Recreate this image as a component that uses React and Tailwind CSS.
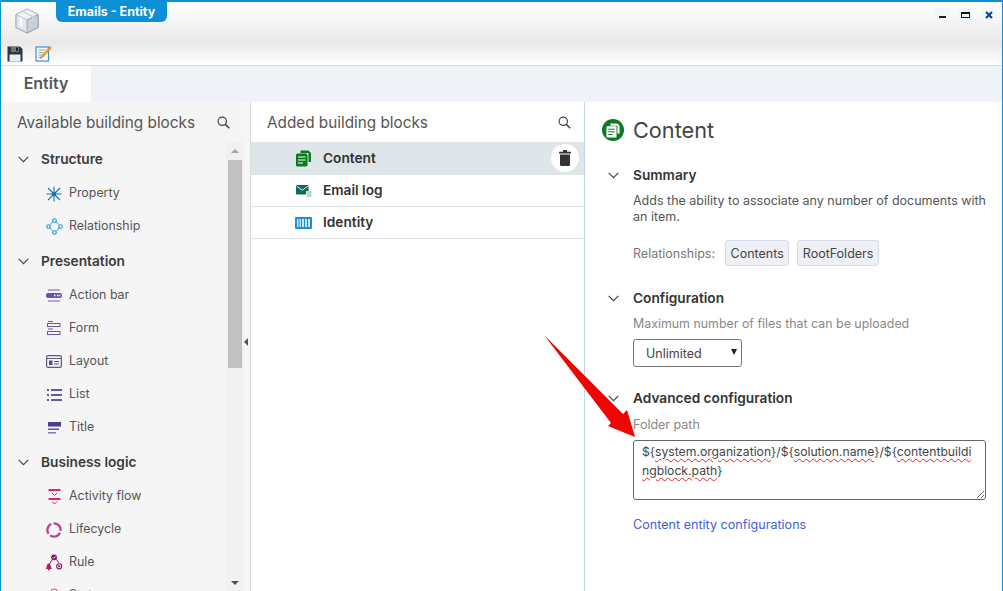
import React from "react";

const Chevron = ({ className = "" }) => (
  <svg width="11" height="7" viewBox="0 0 11 7" className={className}>
    <path d="M0.7 0.8 L5.5 5.6 L10.3 0.8" fill="none" stroke="#444" strokeWidth="1.2" />
  </svg>
);

const Search = () => (
  <svg width="13" height="13" viewBox="0 0 14 14">
    <circle cx="5.7" cy="5.7" r="4.5" fill="none" stroke="#444" strokeWidth="1.3" />
    <path d="M9 9 L13.2 13.2" stroke="#444" strokeWidth="1.6" />
  </svg>
);

const Cube = () => (
  <svg width="24" height="26" viewBox="0 0 26 28">
    <path d="M13 1 L25 7 L25 21 L13 27 L1 21 L1 7Z" fill="#e4e8ee" stroke="#8d97a6" strokeWidth="1" />
    <path d="M1 7 L13 13 L25 7 L13 1Z" fill="#f0f2f6" stroke="#aab3bf" strokeWidth="0.8" />
    <path d="M13 13 L13 27 L25 21 L25 7Z" fill="#c9d0da" stroke="#8d97a6" strokeWidth="0.8" />
    <path d="M7 4 L19 10 L19 14 L21 13 L21 9 L9 3Z" fill="#d0d5de" />
    <path d="M5 9.5 L5 19 L8 20.5 L8 11Z" fill="#fff" />
  </svg>
);

const Save = () => (
  <svg width="16" height="16" viewBox="0 0 16 16">
    <path d="M0.5 0.5 H13 L15.5 3 V15.5 H0.5Z" fill="#2e343c" />
    <rect x="4" y="1" width="8" height="5" fill="#6f7780" />
    <rect x="9" y="1.5" width="2" height="3.5" fill="#1d2126" />
    <rect x="2.5" y="8.5" width="11" height="7" fill="#e9edf5" />
  </svg>
);

const EditDoc = () => (
  <svg width="17" height="17" viewBox="0 0 17 17">
    <rect x="1" y="2" width="12.5" height="14" fill="#f7fbff" stroke="#3f8fd0" strokeWidth="1.2" />
    <path d="M3.5 5 H10 M3.5 7.5 H8 M3.5 10 H6.5 M3.5 12.5 H6" stroke="#8aa0b5" strokeWidth="1" />
    <path d="M15 1.5 L16.5 3 L8 12 L5.5 13.5 L6.5 10.5Z" fill="#f0a92e" stroke="#b86f10" strokeWidth="0.6" />
  </svg>
);

const IProperty = () => (
  <svg width="16" height="16" viewBox="0 0 16 16">
    <path d="M8 0.5 V15.5 M2 2 L14 14 M14 2 L2 14 M0.5 8 H15.5" stroke="#1478ae" strokeWidth="1.1" fill="none" />
    <circle cx="8" cy="8" r="2.2" fill="#1478ae" />
  </svg>
);

const IRel = () => (
  <svg width="17" height="17" viewBox="0 0 17 17" fill="none" stroke="#2d93d6" strokeWidth="1.1">
    <circle cx="8.5" cy="2.5" r="1.8" />
    <circle cx="2.5" cy="8.5" r="1.8" />
    <circle cx="14.5" cy="8.5" r="1.8" />
    <circle cx="8.5" cy="14.5" r="1.8" />
    <path d="M7 3.8 L3.8 7 M10 3.8 L13.2 7 M3.8 10 L7 13.2 M13.2 10 L10 13.2" strokeDasharray="1.4 0.8" />
  </svg>
);

const IAction = () => (
  <svg width="16" height="13" viewBox="0 0 16 13">
    <rect x="2" y="0" width="12" height="2" fill="#b3a6d2" />
    <rect x="0" y="4" width="16" height="5" rx="2" fill="#6b55a3" />
    <path d="M8 6.5 H9.5 M11 6.5 H12.5 M13.2 6.5 H14.4" stroke="#fff" strokeWidth="1.3" />
    <rect x="2" y="11" width="12" height="2" fill="#b3a6d2" />
  </svg>
);

const IForm = () => (
  <svg width="14" height="15" viewBox="0 0 14 15" fill="none" stroke="#6b55a3" strokeWidth="1">
    <path d="M1 0.5 H6" />
    <rect x="0.5" y="2.5" width="12.5" height="3" />
    <path d="M1 8 H6" />
    <rect x="0.5" y="10.5" width="12.5" height="3" />
  </svg>
);

const ILayout = () => (
  <svg width="16" height="13" viewBox="0 0 16 13">
    <rect x="0.6" y="0.6" width="14.8" height="11.8" rx="1.5" fill="none" stroke="#5f5a85" strokeWidth="1.2" />
    <path d="M1 3.5 H15" stroke="#5f5a85" strokeWidth="1" />
    <rect x="3" y="5.5" width="3.5" height="4.5" fill="#5f4a9c" />
    <path d="M8 6.5 H13 M8 9 H13" stroke="#5f4a9c" strokeWidth="1.2" />
  </svg>
);

const IList = () => (
  <svg width="15" height="12" viewBox="0 0 15 12" fill="#6b55a3">
    <rect x="0" y="0" width="2" height="2" />
    <rect x="4" y="0" width="11" height="2" />
    <rect x="0" y="5" width="2" height="2" />
    <rect x="4" y="5" width="11" height="2" />
    <rect x="0" y="10" width="2" height="2" />
    <rect x="4" y="10" width="11" height="2" />
  </svg>
);

const ITitle = () => (
  <svg width="13" height="12" viewBox="0 0 13 12" fill="#4f3a91">
    <rect x="0" y="0" width="13" height="4.5" />
    <rect x="0" y="6.5" width="11" height="1.5" fill="#6b55a3" />
    <rect x="0" y="10" width="8" height="1.5" fill="#8a78b8" />
  </svg>
);

const IFlow = () => (
  <svg width="13" height="16" viewBox="0 0 13 16">
    <rect x="0.5" y="0" width="12" height="2" fill="#e8245f" />
    <path d="M4 4 L6.5 6.5 L9 4" fill="none" stroke="#e8245f" strokeWidth="1" />
    <rect x="0.5" y="9" width="12" height="2" fill="#e8245f" />
    <path d="M4 12.5 L6.5 15 L9 12.5" fill="none" stroke="#e8245f" strokeWidth="1" />
  </svg>
);

const ILife = () => (
  <svg width="16" height="16" viewBox="0 0 16 16" fill="none" stroke="#b93a93" strokeWidth="2.2">
    <circle cx="8" cy="8" r="6.6" strokeDasharray="11.5 2.3" transform="rotate(25 8 8)" />
  </svg>
);

const IRule = () => (
  <svg width="19" height="18" viewBox="0 0 19 18">
    <path d="M9 4 L4 11 M11 4 L14.5 9" stroke="#7a1a5c" strokeWidth="1" />
    <circle cx="9.5" cy="3" r="3" fill="#7a1a5c" />
    <path d="M8 3 L9.2 4.2 L11.2 2" stroke="#fff" strokeWidth="0.9" fill="none" />
    <path d="M1 14.5 H7 M2.5 14.5 C2.5 9 5.5 9 5.5 14.5 M4 15 V17" stroke="#a3216f" strokeWidth="1.5" fill="#a3216f" />
    <circle cx="15" cy="12.5" r="2.7" fill="none" stroke="#7a1a5c" strokeWidth="1.1" />
    <circle cx="15" cy="12.5" r="1.2" fill="#7a1a5c" />
  </svg>
);

const IState = () => (
  <svg width="16" height="16" viewBox="0 0 16 16" fill="none" stroke="#d94f9a" strokeWidth="1.2">
    <circle cx="8" cy="4" r="3" />
  </svg>
);

const IContent = () => (
  <svg width="17" height="17" viewBox="0 0 16 17">
    <path d="M5 0.5 H13 L15.5 3 V12 H13 V3 H5Z" fill="#0b7a20" />
    <rect x="0.5" y="3.5" width="11.5" height="13" rx="1.5" fill="#0b7a20" />
    <path d="M2.5 7 H10 M2.5 10 H10 M2.5 13 H7.5" stroke="#fff" strokeWidth="1.1" />
  </svg>
);

const IMail = () => (
  <svg width="16" height="12" viewBox="0 0 16 12">
    <rect x="0" y="0" width="12.5" height="9.5" rx="1" fill="#0e6b5b" />
    <path d="M0.5 1 L6.2 5.2 L12 1" fill="none" stroke="#fff" strokeWidth="0.9" />
    <rect x="10" y="6" width="6" height="6" fill="#fff" />
    <path d="M10.5 7 H15.5 M10.5 9 H15.5 M10.5 11 H15.5" stroke="#73ad9f" strokeWidth="1" />
  </svg>
);

const IIdentity = () => (
  <svg width="17" height="12" viewBox="0 0 17 12">
    <rect x="0" y="0" width="17" height="12" rx="1" fill="#1c8fdc" />
    <rect x="2" y="2" width="13" height="8" fill="#cfe8f9" />
    <path d="M4 2 V10 M6.5 2 V10 M9.5 2 V10 M12.5 2 V10" stroke="#1c8fdc" strokeWidth="1.1" />
  </svg>
);

const Trash = () => (
  <svg width="12" height="16" viewBox="0 0 12 16" fill="#333">
    <rect x="0" y="1.8" width="12" height="1.8" rx="0.4" />
    <rect x="4" y="0" width="4" height="2" />
    <path d="M1 4.6 H11 V14.5 A1.5 1.5 0 0 1 9.5 16 H2.5 A1.5 1.5 0 0 1 1 14.5Z" />
  </svg>
);

const PaletteItem = ({ icon, label }) => (
  <div className="h-[33px] shrink-0 flex items-center pt-[2px]">
    <div className="w-[68px] pl-[44px] pr-[6px] flex justify-center items-center shrink-0">
      <div className="w-[18px] flex justify-center shrink-0">{icon}</div>
    </div>
    <span className="text-[12.4px] text-[#555]">{label}</span>
  </div>
);

const SectionHead = ({ label }) => (
  <div className="h-[33px] shrink-0 flex items-center">
    <Chevron className="ml-[17px] mr-[12px] shrink-0" />
    <span className="text-[13.7px] font-semibold text-[#3a3a3a]">{label}</span>
  </div>
);

const AddedRow = ({ icon, label, active }) => (
  <div className={`flex items-center border-b border-[#dfe5e9] ${active ? "h-[33px] bg-[#dfe6ea]" : "h-[32px]"}`}>
    <div className="w-[72px] pl-[44px] pr-[11px] flex justify-center shrink-0">{icon}</div>
    <span className="text-[13.7px] font-semibold text-[#333]">{label}</span>
    {active && (
      <div className="ml-auto mr-[5px] w-[28px] h-[28px] rounded-full bg-white flex items-center justify-center">
        <Trash />
      </div>
    )}
  </div>
);

const DetailHead = ({ label }) => (
  <div className="flex items-center h-[20px]">
    <Chevron className="ml-[23px] mr-[14px] shrink-0" />
    <span className="text-[13.7px] font-semibold text-[#333]">{label}</span>
  </div>
);

const Wavy = ({ children }) => (
  <span className="underline decoration-wavy decoration-[#e0202a] decoration-1 underline-offset-2">{children}</span>
);

export default function App() {
  return (
    <div
      className="relative w-[1003px] h-[591px] overflow-hidden bg-white flex flex-col border-t-2 border-l border-r border-[#0f8fd6]"
      style={{ fontFamily: "Inter, 'Noto Sans', sans-serif" }}
    >
      <div className="h-[64px] shrink-0 flex flex-col bg-gradient-to-b from-white via-[#e9e9e9] via-65% to-white border-b border-[#cddbe8]">
        <div className="flex items-start h-[40px] shrink-0">
          <div className="ml-[14px] mt-[6px]"><Cube /></div>
          <div className="ml-[17px] w-[111px] h-[20px] bg-[#0f8fd6] rounded-b-[6px] text-white text-[12.5px] font-bold flex items-center justify-center">
            Emails - Entity
          </div>
          <div className="ml-auto mt-[6px] mr-[6px] flex gap-[9px]">
            <div className="w-[14px] h-[14px] bg-[#f0f7fc] flex items-center justify-center">
              <div className="w-[7px] h-[2px] bg-[#222] mt-[4px]" />
            </div>
            <div className="w-[15px] h-[14px] bg-[#f0f7fc] flex items-center justify-center">
              <div className="w-[9px] h-[6px] border border-[#111] border-t-2" />
            </div>
            <div className="w-[14px] h-[14px] bg-[#f0f7fc] flex items-center justify-center">
              <svg width="8" height="8" viewBox="0 0 8 8">
                <path d="M1 1 L7 7 M7 1 L1 7" stroke="#0b3f86" strokeWidth="2" />
              </svg>
            </div>
          </div>
        </div>
        <div className="flex items-center pl-[6px] gap-[12px] mt-[3px]">
          <Save />
          <EditDoc />
        </div>
      </div>

      <div className="h-[36px] shrink-0 bg-[#eff3f7] flex">
        <div className="w-[90px] bg-white flex items-center justify-center pb-[2px] text-[16px] font-semibold text-[#555]">
          Entity
        </div>
      </div>

      <div className="flex-1 flex min-h-0">
        <div className="w-[243px] bg-[#f5f5f5] shrink-0 overflow-hidden flex flex-col">
          <div className="h-[40px] shrink-0 flex items-center pl-[16px] pr-[14px]">
            <span className="text-[15.3px] text-[#555] pt-[2px]">Available building blocks</span>
            <span className="ml-auto flex"><Search /></span>
          </div>
          <div className="flex-1 min-h-0 flex">
            <div className="w-[225px] shrink-0 overflow-hidden flex flex-col pt-[1px]">
              <SectionHead label="Structure" />
              <PaletteItem icon={<IProperty />} label="Property" />
              <PaletteItem icon={<IRel />} label="Relationship" />
              <div className="h-[3px] shrink-0" />
              <SectionHead label="Presentation" />
              <PaletteItem icon={<IAction />} label="Action bar" />
              <PaletteItem icon={<IForm />} label="Form" />
              <PaletteItem icon={<ILayout />} label="Layout" />
              <PaletteItem icon={<IList />} label="List" />
              <PaletteItem icon={<ITitle />} label="Title" />
              <div className="h-[3px] shrink-0" />
              <SectionHead label="Business logic" />
              <PaletteItem icon={<IFlow />} label="Activity flow" />
              <PaletteItem icon={<ILife />} label="Lifecycle" />
              <PaletteItem icon={<IRule />} label="Rule" />
              <PaletteItem icon={<IState />} label="State" />
            </div>
            <div className="w-[18px] shrink-0 bg-[#f1f1f1] flex flex-col">
              <div className="h-[18px] flex items-center justify-center">
                <div className="w-0 h-0 border-x-[4px] border-x-transparent border-b-[4px] border-b-[#a3a3a3]" />
              </div>
              <div className="h-[208px] mx-[2px] bg-[#c1c1c1]" />
              <div className="flex-1 flex items-end justify-center pb-[6px]">
                <div className="w-0 h-0 border-x-[4px] border-x-transparent border-t-[4px] border-t-[#505050]" />
              </div>
            </div>
          </div>
        </div>

        <div className="w-[7px] shrink-0 bg-[#f6f6f6] border-r border-[#dcdcdc] flex items-center">
          <div className="mb-[10px] w-0 h-0 border-y-[4px] border-y-transparent border-r-[4px] border-r-[#555]" />
        </div>

        <div className="w-[334px] shrink-0 border-r border-[#c5d6e0] flex flex-col">
          <div className="h-[40px] shrink-0 flex items-center pl-[16px] pr-[13px]">
            <span className="text-[15.3px] text-[#555] pt-[2px]">Added building blocks</span>
            <span className="ml-auto flex"><Search /></span>
          </div>
          <AddedRow active icon={<IContent />} label="Content" />
          <AddedRow icon={<IMail />} label="Email log" />
          <AddedRow icon={<IIdentity />} label="Identity" />
        </div>

        <div className="flex-1 min-w-0 flex flex-col pt-[16px]">
          <div className="flex items-center h-[24px] pl-[17px]">
            <div className="w-[22px] h-[22px] rounded-full bg-[#0b7a20] flex items-center justify-center shrink-0">
              <svg width="14" height="15" viewBox="0 0 16 17">
                <path d="M5 0.5 H13 L15.5 3 V12 H13 V3 H5Z" fill="#fff" />
                <rect x="0.5" y="3.5" width="11.5" height="13" rx="1" fill="#fff" />
                <path d="M2.5 7 H10 M2.5 10 H10 M2.5 13 H7.5" stroke="#0b7a20" strokeWidth="1.2" />
              </svg>
            </div>
            <span className="ml-[9px] text-[21.7px] text-[#444]">Content</span>
          </div>

          <div className="mt-[23px]"><DetailHead label="Summary" /></div>
          <div className="ml-[48px] mr-[15px] mt-[8px] text-[12.5px] leading-[16px] text-[#555]">
            Adds the ability to associate any number of documents with an item.
          </div>
          <div className="ml-[48px] mt-[15px] flex items-center gap-[8px] text-[12.5px]">
            <span className="text-[#777] mr-[2px] pt-[2px]">Relationships:</span>
            <span className="h-[26px] px-[4.5px] pt-[2px] flex items-center bg-[#eef0f5] border border-[#d6dde8] rounded-[3px] text-[#444]">Contents</span>
            <span className="h-[26px] px-[4.5px] pt-[2px] flex items-center bg-[#eef0f5] border border-[#d6dde8] rounded-[3px] text-[#444]">RootFolders</span>
          </div>

          <div className="mt-[22px]"><DetailHead label="Configuration" /></div>
          <div className="ml-[48px] mt-[8px] text-[12.4px] leading-[16px] text-[#888]">
            Maximum number of files that can be uploaded
          </div>
          <div className="ml-[48px] mt-[7px] relative w-[109px] h-[28px]">
            <select className="appearance-none w-full h-full border border-[#777] rounded-[3px] bg-white pl-[12px] pt-[2px] text-[12.5px] text-[#444] outline-none">
              <option>Unlimited</option>
            </select>
            <div className="absolute right-[5px] top-[10px] w-0 h-0 border-x-[3.5px] border-x-transparent border-t-[6px] border-t-[#222]" />
          </div>

          <div className="mt-[21px]"><DetailHead label="Advanced configuration" /></div>
          <div className="ml-[48px] mt-[9px] text-[12.5px] leading-[16px] text-[#888]">Folder path</div>
          <div className="ml-[48px] mr-[16px] mt-[7px] h-[60px] border border-[#666] rounded-[3px] px-[8px] pt-[2px] text-[12.2px] leading-[18.5px] text-[#444] break-all resize overflow-hidden">
            ${"{"}<Wavy>system.organization</Wavy>{"}"}/${"{"}<Wavy>solution.name</Wavy>{"}"}/${"{"}<Wavy>contentbuildingblock.path</Wavy>{"}"}
          </div>
          <a href="#" className="ml-[48px] mt-[16px] text-[12.6px] text-[#3f5fdc]">Content entity configurations</a>
        </div>
      </div>

      <svg className="absolute left-[529px] top-[318px] pointer-events-none" width="110" height="120" viewBox="0 0 110 120">
        <path d="M14 15 L93 94 L97 90 L105 117 L78 106 L81 103 Z" fill="#f00505" />
      </svg>
    </div>
  );
}
